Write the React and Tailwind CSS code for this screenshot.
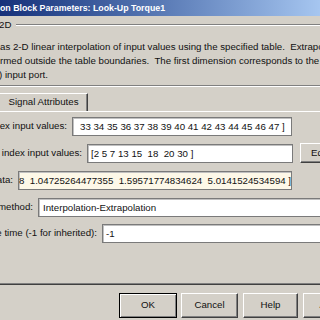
import React from 'react';

const Field = ({ label, labelWidth, inputWidth, bg = 'bg-white', pad = 'pl-[3px]', children, mt }) => (
  <div className={`flex items-center h-[19px] ${mt}`}>
    <div
      className="shrink-0 flex justify-end overflow-hidden whitespace-nowrap"
      style={{ width: labelWidth }}
    >
      <span>{label}</span>
    </div>
    <div
      className={`ml-[5px] shrink-0 h-[19px] border border-[#7a7a7a] shadow-[inset_1px_1px_0_#c0c0c0] ${bg} ${pad} overflow-hidden whitespace-nowrap leading-[17px]`}
      style={{ width: inputWidth }}
    >
      {children}
    </div>
  </div>
);

const Button = ({ label, width, isDefault }) => (
  <div
    className={`shrink-0 h-[25px] flex items-center justify-center ${
      isDefault
        ? 'border border-black shadow-[inset_1px_1px_0_#ffffff,inset_-1px_-1px_0_#808080]'
        : 'border border-t-white border-l-white border-b-[#404040] border-r-[#404040] shadow-[inset_-1px_-1px_0_#808080]'
    }`}
    style={{ width }}
  >
    {label}
  </div>
);

const App = () => {
  return (
    <div className="w-[320px] h-[320px] overflow-hidden bg-[#d4d0c8] font-['Liberation_Sans',Arial,sans-serif] text-[9.7px] text-[#111]">
      {/* title bar */}
      <div className="h-4 bg-gradient-to-r from-[#16307a] to-[#a6c6f0] text-white font-bold text-[8.8px] leading-4 whitespace-nowrap">
        on Block Parameters: Look-Up Torque1
      </div>

      {/* description group */}
      <div className="flex items-center h-[18px]">
        <span className="ml-[-1px]">2D</span>
        <div className="flex-1 ml-[5px] h-[2px] border-t border-[#808080] border-b border-b-white" />
      </div>
      <div className="mt-[6px] leading-[14px] whitespace-nowrap">
        <div>as 2-D linear interpolation of input values using the specified table.&nbsp; Extrapolation</div>
        <div>rmed outside the table boundaries.&nbsp; The first dimension corresponds to the top</div>
        <div className="ml-[-1px]">) input port.</div>
      </div>
      <div className="mt-[3px] h-[2px] border-t border-[#808080] border-b border-b-white" />

      {/* tabs */}
      <div className="mt-[6px] flex items-end h-[19px] border-b border-white">
        <div className="w-[88px] h-[18px] border-t border-white border-r border-r-[#404040] shadow-[inset_-1px_0_0_#808080] flex items-center justify-center">
          Signal Attributes
        </div>
        <div className="flex-1" />
      </div>

      {/* parameters */}
      <div className="mt-[5px]">
        <Field label="Row index input values:" labelWidth={67} inputWidth={220} pad="pl-[7px]">
          33 34 35 36 37 38 39 40 41 42 43 44 45 46 47 ]
        </Field>
        <div className="flex items-center mt-[7px]">
          <Field label="Column index input values:" labelWidth={82} inputWidth={206}>
            [2 5 7 13 15&nbsp; 18&nbsp; 20 30 ]
          </Field>
          <div className="ml-[7px] shrink-0 w-[50px] h-[20px] pl-[10px] flex items-center border border-t-white border-l-white border-b-[#404040] border-r-[#404040] shadow-[inset_-1px_-1px_0_#808080]">
            Edit...
          </div>
        </div>
        <Field
          label="Table data:"
          labelWidth={13}
          inputWidth={274}
          mt="mt-[8px]"
          bg="bg-[#fdf8e8]"
          pad="pl-0"
        >
          <span>8&nbsp; 1.04725264477355&nbsp; 1.59571774834624&nbsp; 5.0141524534594 ]</span>
        </Field>
        <Field label="Lookup method:" labelWidth={33} inputWidth={300} mt="mt-[8px]" pad="pl-[4px]">
          Interpolation-Extrapolation
        </Field>
        <Field label="Sample time (-1 for inherited):" labelWidth={97} inputWidth={240} mt="mt-[7px]" pad="pl-[3px]">
          -1
        </Field>
      </div>

      {/* panel bottom edge */}
      <div className="mt-[40px] h-[2px] border-t border-[#808080] border-b border-b-[#404040]" />

      {/* buttons */}
      <div className="mt-[8px] flex ml-[119px]">
        <Button label="OK" width={58} isDefault />
        <div className="ml-[4px]">
          <Button label="Cancel" width={57} />
        </div>
        <div className="ml-[5px]">
          <Button label="Help" width={55} />
        </div>
        <div className="ml-[5px]">
          <Button label="Apply" width={57} />
        </div>
      </div>
    </div>
  );
};

export default App;
